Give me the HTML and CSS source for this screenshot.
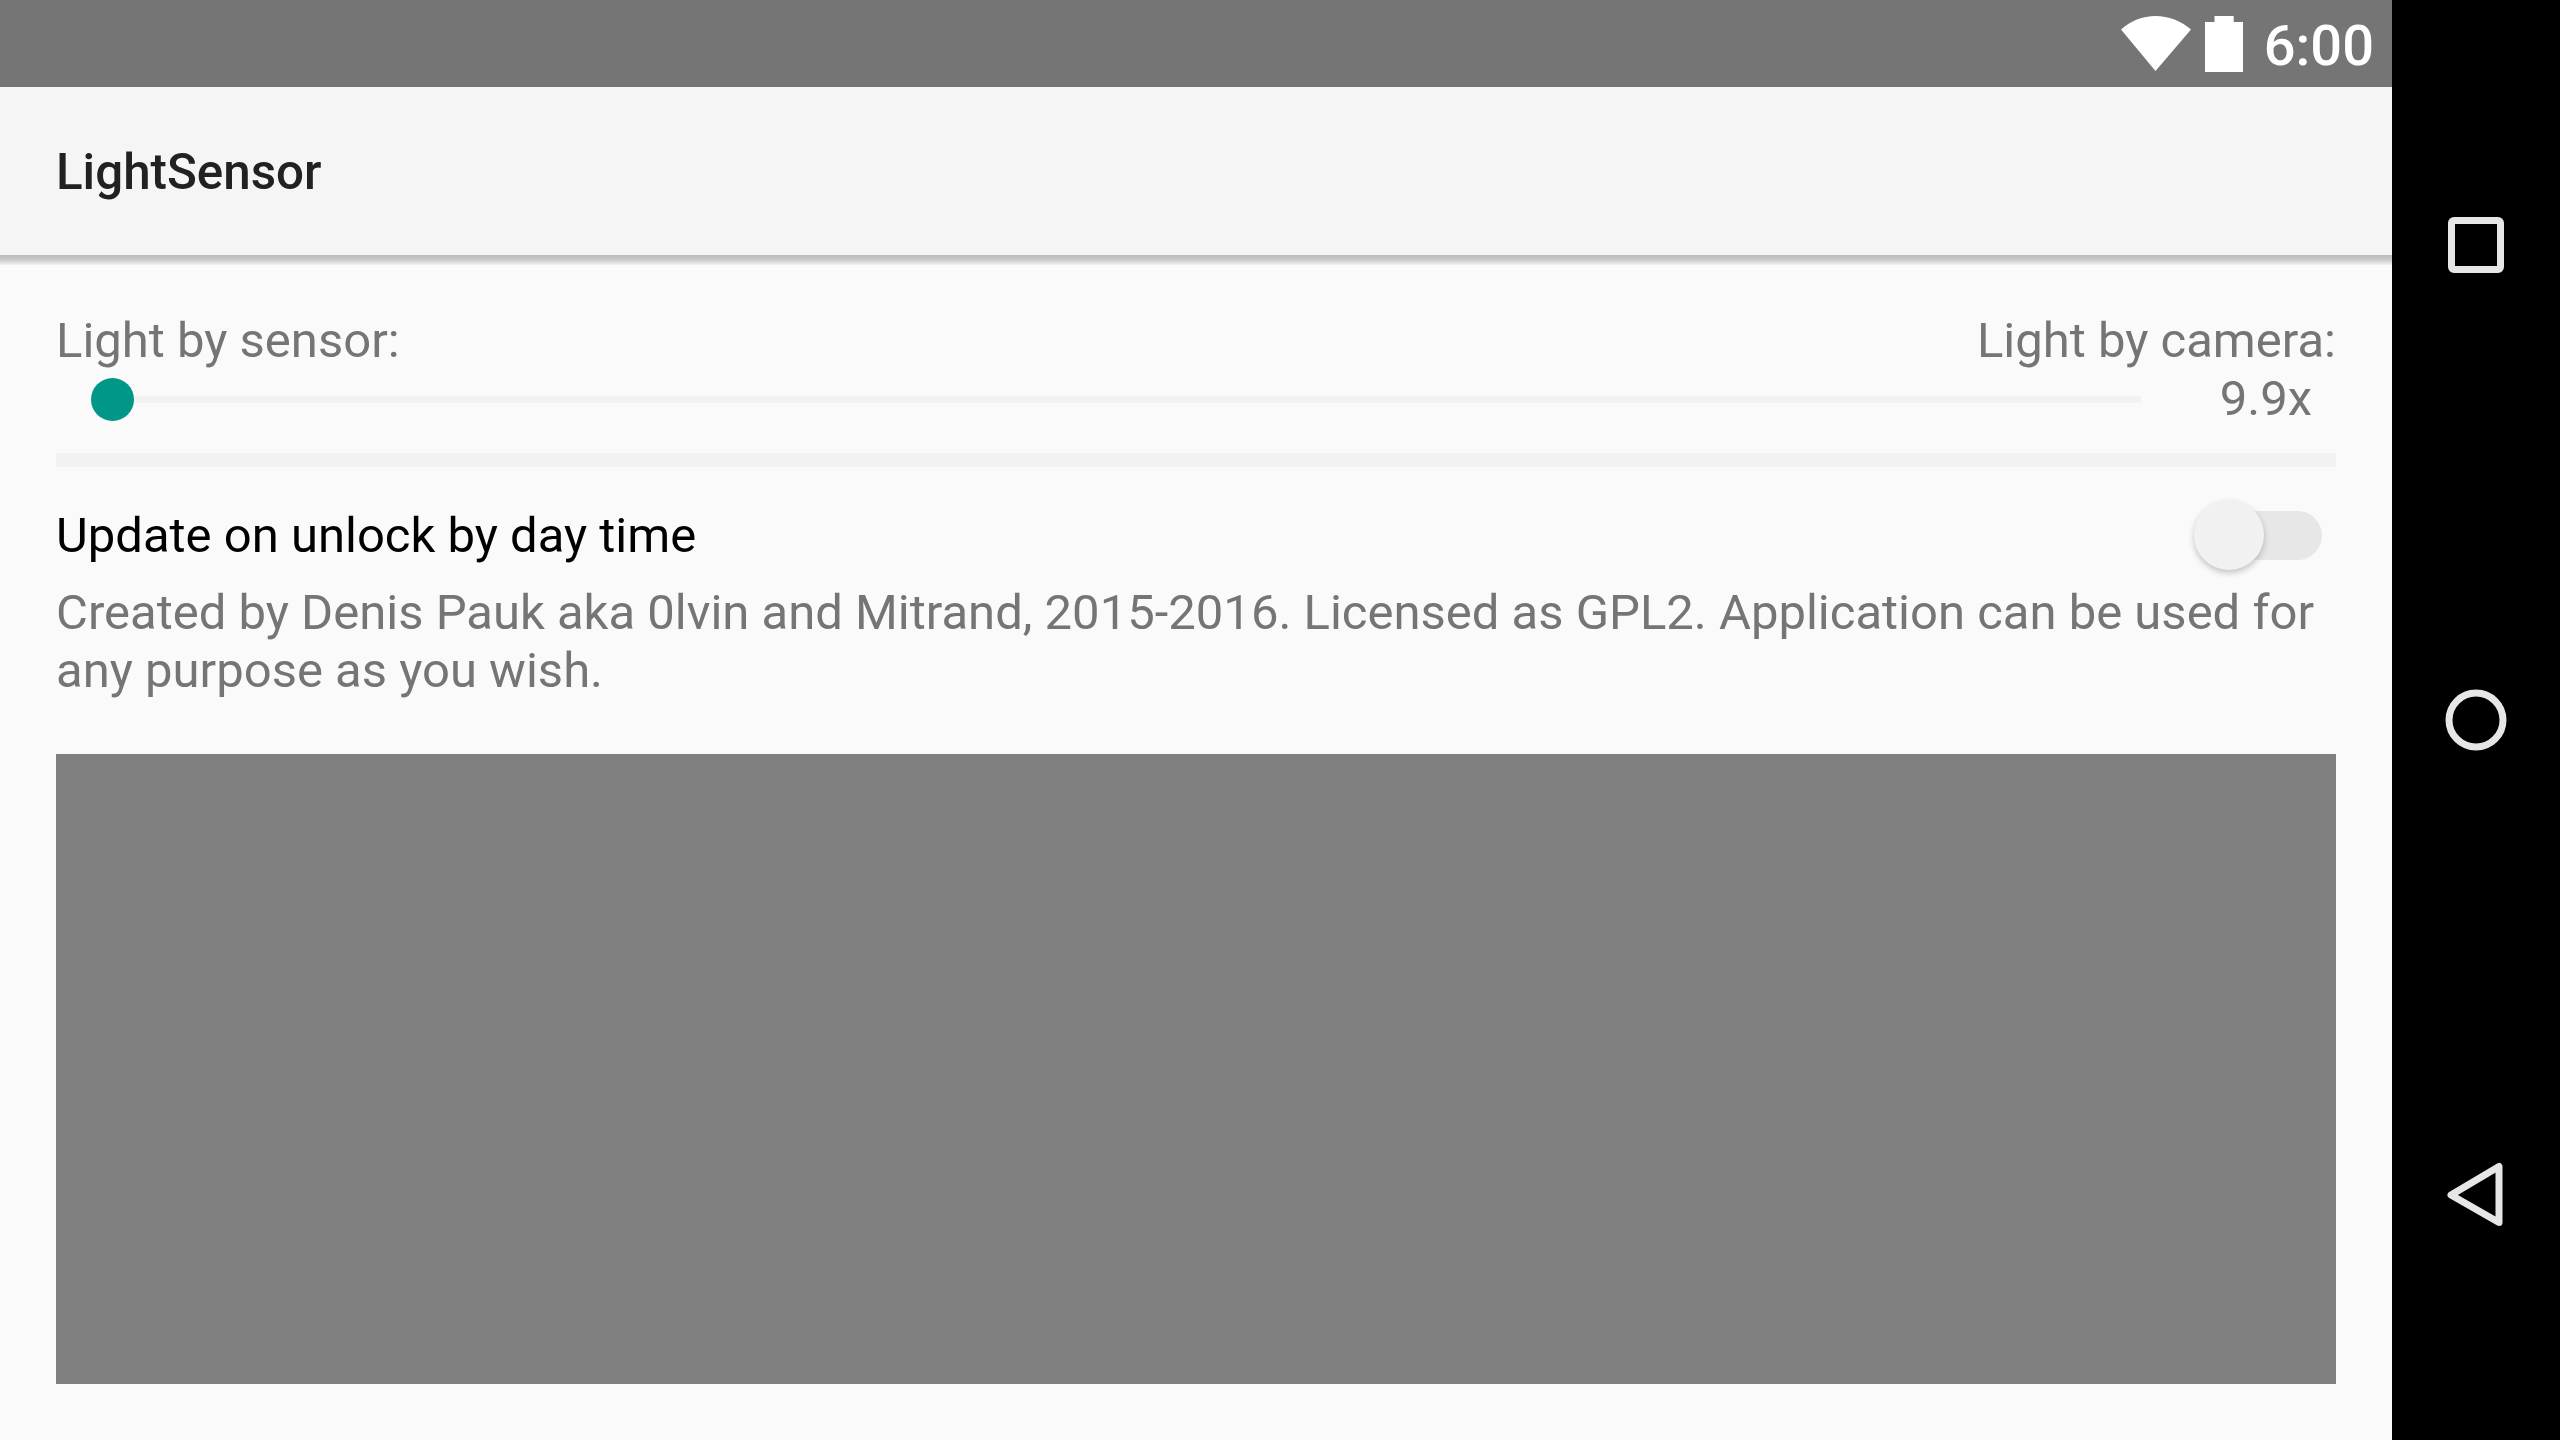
FILE: index.html
```html
<!DOCTYPE html>
<html lang="en">
<head>
<meta charset="utf-8">
<title>LightSensor</title>
<link rel="stylesheet" href="styles.css">
</head>
<body>
<div class="screen">
  <main class="main">
    <header class="status">
      <svg class="wifi" viewBox="0 0 70 55"><path d="M34.5 55 0 13.5C9.500 5 21.500 0 34.500 0S60 5 70 13.500Z"/></svg>
      <svg class="battery" viewBox="0 0 38 56"><path d="M9.500 0H28.700V6H38V56H0V6H9.500Z"/></svg>
      <span class="clock">6:00</span>
    </header>
    <div class="appbar"><h1 class="title">LightSensor</h1></div>
    <div class="appbar-shadow"></div>
    <section class="content">
      <div class="labels">
        <span>Light by sensor:</span>
        <span>Light by camera:</span>
      </div>
      <div class="slider-row">
        <div class="slider"><div class="track"></div><div class="thumb"></div></div>
        <span class="value">9.9x</span>
      </div>
      <div class="divider"></div>
      <div class="toggle-row">
        <span class="toggle-label">Update on unlock by day time</span>
        <div class="switch"><div class="switch-track"></div><div class="switch-thumb"></div></div>
      </div>
      <p class="about">Created by Denis Pauk aka 0lvin and Mitrand, 2015-2016. Licensed as GPL2. Application can be used for any purpose as you wish.</p>
      <div class="preview"></div>
    </section>
  </main>
  <nav class="nav">
    <svg class="nav-icon" viewBox="0 0 62 66"><rect x="6.500" y="8.500" width="49" height="49" rx="2.500"/></svg>
    <svg class="nav-icon" viewBox="0 0 62 66"><circle cx="31" cy="33" r="27"/></svg>
    <svg class="nav-icon" viewBox="0 0 62 66"><path d="M54 4.500V60.500L6 33Z"/></svg>
  </nav>
</div>
</body>
</html>
```
FILE: styles.css
```css
* { box-sizing: border-box; }
html, body { margin: 0; padding: 0; }
body { width: 2560px; height: 1440px; overflow: hidden; font-family: Roboto, sans-serif; background: #000; }
.screen { display: flex; width: 2560px; height: 1440px; }
.main { width: 2392px; height: 1440px; display: flex; flex-direction: column; background: #fafafa; }
.status { height: 87px; flex: none; background: #757575; display: flex; align-items: center; padding-right: 18px; justify-content: flex-end; }
.wifi { width: 70px; height: 55px; fill: #fff; margin: 0 14px 0 0; position: relative; top: -0.500px; }
.battery { width: 38px; height: 56px; fill: #fff; margin-right: 21px; position: relative; top: 0.500px; }
.clock { color: #fff; font-size: 56px; font-weight: 500; line-height: 87px; position: relative; top: 3px; }
.appbar { height: 168px; flex: none; background: #f5f5f5; display: flex; align-items: center; padding-left: 56px; padding-top: 2px; }
.title { margin: 0; font-size: 49.300px; font-weight: 500; color: #212121; }
.appbar-shadow { height: 10px; flex: none; background: linear-gradient(#bcbcbc, #c4c4c4 35%, #e2e2e2 80%, #f4f4f4); }
.content { padding: 47px 56px 0; display: flex; flex-direction: column; }
.labels { display: flex; justify-content: space-between; font-size: 49px; line-height: 57px; color: #757575; }
.slider-row { display: flex; align-items: center; height: 59px; }
.slider { position: relative; flex: 1; height: 43px; margin-top: 2px; margin-left: 56px; margin-right: 79px; display: flex; align-items: center; }
.track { width: 100%; height: 7px; background: #f2f2f2; }
.thumb { position: absolute; left: -21.500px; top: 0; width: 43px; height: 43px; border-radius: 50%; background: #009688; }
.value { font-size: 49px; line-height: 59px; color: #757575; margin-right: 24px; }
.divider { height: 14px; margin-top: 25px; background: #f2f2f2; }
.toggle-row { display: flex; align-items: center; justify-content: space-between; height: 70px; margin-top: 33px; }
.toggle-label { font-size: 49px; line-height: 59px; color: #000; }
.switch { position: relative; width: 119px; height: 70px; margin-right: 14px; display: flex; align-items: center; }
.switch-track { width: 100%; height: 49px; border-radius: 24.500px; background: #e7e7e7; }
.switch-thumb { position: absolute; left: -9px; top: 0; width: 70px; height: 70px; border-radius: 50%; background: #f1f1f1; box-shadow: 0 3px 6px rgba(0,0,0,.22); }
.about { margin: 14px 0 0; font-size: 49px; line-height: 58px; color: #757575; }
.preview { height: 630px; margin-top: 54px; background: #808080; }
.nav { width: 168px; height: 1440px; background: #000; display: grid; grid-auto-rows: 475px; padding-top: 7.500px; justify-items: center; align-items: center; }
.nav-icon { width: 62px; height: 66px; fill: none; stroke: #e6e6e6; stroke-width: 7; stroke-linejoin: round; }
```
